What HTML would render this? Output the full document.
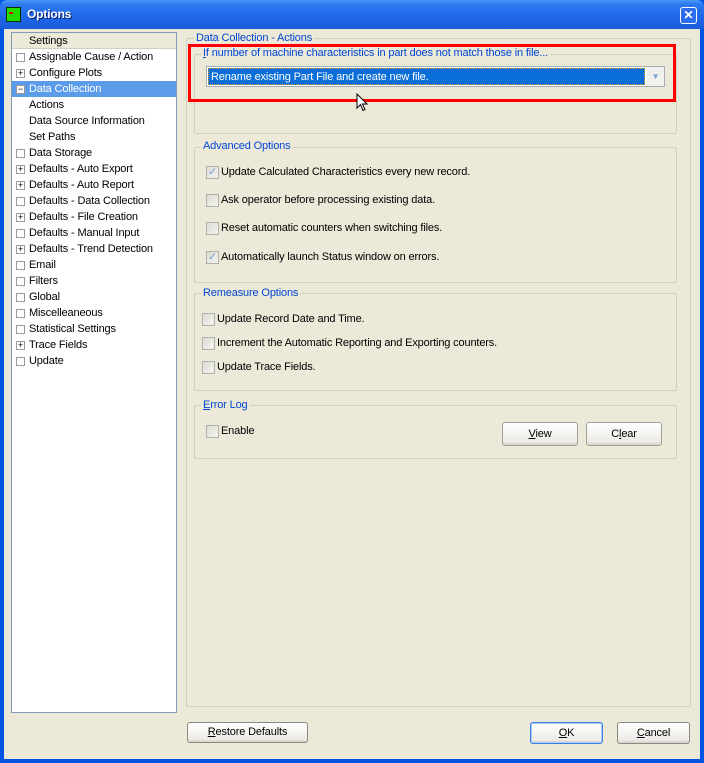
<!DOCTYPE html>
<html><head><meta charset="utf-8"><style>
*{margin:0;padding:0;box-sizing:border-box}
body{width:704px;height:763px;overflow:hidden;font:11px "Liberation Sans",sans-serif;letter-spacing:-0.15px;color:#000;background:#0054E3;position:relative}
.a{position:absolute}
#title{left:0;top:0;width:704px;height:29px;background:linear-gradient(#4A98F8 0%,#2C7AF0 15%,#1E66E8 60%,#1A5CD8 100%);border-radius:7px 7px 0 0}
#win{left:4px;top:29px;width:696px;height:730px;background:#ECE9D8}
.grp{position:absolute;border:1px solid #D0D0BF;border-radius:2px}
.lbl{position:absolute;background:#ECE9D8;color:#0046D5;padding:0 2px;white-space:nowrap}
.cb{position:absolute;width:13px;height:13px;border:1px solid #B0B0A8;background:linear-gradient(135deg,#DCDCD4,#F4F4F0)}
.ct{position:absolute;white-space:nowrap}
.btn{position:absolute;border:1px solid #003C74;border-radius:3px;background:linear-gradient(#FFFFFF,#ECEBE6 85%,#D6D0C5);text-align:center;line-height:20px}
.tr{position:absolute;left:0;width:164px;height:16px;line-height:16px;white-space:nowrap}
.ex{position:absolute;left:4px;top:4px;width:9px;height:9px;border:1px solid #999;background:#fff;font-size:9px;line-height:7px;text-align:center}
</style></head><body>
<div class="a" id="title"></div>
<div class="a" style="left:6px;top:7px;width:15px;height:15px;background:#22DD00;border:1px solid #030"></div>
<div class="a" style="left:9px;top:12px;width:4px;height:2px;background:#d00"></div>
<div class="a" style="left:27px;top:7px;color:#fff;font-weight:bold;font-size:12px;text-shadow:1px 1px #0A1E6A">Options</div>
<div class="a" style="left:680px;top:7px;width:17px;height:17px;border:1px solid #fff;border-radius:3px;background:#2C6DF0;color:#fff;font-weight:bold;text-align:center;line-height:15px;font-size:12px">✕</div>
<div class="a" id="win"></div>

<div class="a" style="left:11px;top:32px;width:166px;height:681px;background:#fff;border:1px solid #7F9DB9">
 <div class="tr" style="top:0;background:#ECE9D8;border-bottom:1px solid #D0D0BF;padding-left:17px">Settings</div>
 <div class="tr" style="top:16px;padding-left:17px"><span class="ex"></span>Assignable Cause / Action</div>
 <div class="tr" style="top:32px;padding-left:17px"><span class="ex">+</span>Configure Plots</div>
 <div class="tr" style="top:48px;padding-left:17px;background:#5A9CEA;color:#fff"><span class="ex" style="color:#000">−</span>Data Collection</div>
 <div class="tr" style="top:64px;padding-left:17px">Actions</div>
 <div class="tr" style="top:80px;padding-left:17px">Data Source Information</div>
 <div class="tr" style="top:96px;padding-left:17px">Set Paths</div>
 <div class="tr" style="top:112px;padding-left:17px"><span class="ex"></span>Data Storage</div>
 <div class="tr" style="top:128px;padding-left:17px"><span class="ex">+</span>Defaults - Auto Export</div>
 <div class="tr" style="top:144px;padding-left:17px"><span class="ex">+</span>Defaults - Auto Report</div>
 <div class="tr" style="top:160px;padding-left:17px"><span class="ex"></span>Defaults - Data Collection</div>
 <div class="tr" style="top:176px;padding-left:17px"><span class="ex">+</span>Defaults - File Creation</div>
 <div class="tr" style="top:192px;padding-left:17px"><span class="ex"></span>Defaults - Manual Input</div>
 <div class="tr" style="top:208px;padding-left:17px"><span class="ex">+</span>Defaults - Trend Detection</div>
 <div class="tr" style="top:224px;padding-left:17px"><span class="ex"></span>Email</div>
 <div class="tr" style="top:240px;padding-left:17px"><span class="ex"></span>Filters</div>
 <div class="tr" style="top:256px;padding-left:17px"><span class="ex"></span>Global</div>
 <div class="tr" style="top:272px;padding-left:17px"><span class="ex"></span>Miscelleaneous</div>
 <div class="tr" style="top:288px;padding-left:17px"><span class="ex"></span>Statistical Settings</div>
 <div class="tr" style="top:304px;padding-left:17px"><span class="ex">+</span>Trace Fields</div>
 <div class="tr" style="top:320px;padding-left:17px"><span class="ex"></span>Update</div>
</div>

<div class="grp" style="left:186px;top:38px;width:505px;height:669px"></div>
<div class="lbl" style="left:194px;top:32px">Data Collection - Actions</div>
<div class="grp" style="left:194px;top:54px;width:483px;height:80px"></div>
<div class="lbl" style="left:201px;top:47px"><u>I</u>f number of machine characteristics in part does not match those in file...</div>
<div class="a" style="left:206px;top:66px;width:459px;height:21px;border:1px solid #A5ACB2;background:#fff"></div>
<div class="a" style="left:208px;top:68px;width:437px;height:17px;background:#0A6ED8;color:#fff;line-height:17px;padding-left:2px;border:1px dotted #E8A000">Rename existing Part File and create new file.</div>
<div class="a" style="left:647px;top:67px;width:17px;height:19px;background:#F0F0EC;color:#7AA0E0;text-align:center;font-size:8px;line-height:19px">▼</div>
<div class="a" style="left:188px;top:44px;width:488px;height:58px;border:3px solid #F00"></div>
<svg class="a" style="left:356px;top:93px" width="14" height="20"><path d="M1 1 L1 15 L4.5 11.5 L7 17.5 L9 16.5 L6.5 11 L11 11 Z" fill="#fff" stroke="#000" stroke-width="1"/></svg>

<div class="grp" style="left:194px;top:147px;width:483px;height:136px"></div>
<div class="lbl" style="left:201px;top:140px">Advanced Options</div>
<div class="cb" style="left:206px;top:166px;color:#7BA0D8;font-size:11px;line-height:11px;text-align:center">✓</div><div class="ct" style="left:221px;top:166px">Update Calculated Characteristics every new record.</div>
<div class="cb" style="left:206px;top:194px"></div><div class="ct" style="left:221px;top:194px">Ask operator before processing existing data.</div>
<div class="cb" style="left:206px;top:222px"></div><div class="ct" style="left:221px;top:222px">Reset automatic counters when switching files.</div>
<div class="cb" style="left:206px;top:251px;color:#7BA0D8;font-size:11px;line-height:11px;text-align:center">✓</div><div class="ct" style="left:221px;top:251px">Automatically launch Status window on errors.</div>

<div class="grp" style="left:194px;top:293px;width:483px;height:98px"></div>
<div class="lbl" style="left:201px;top:287px">Remeasure Options</div>
<div class="cb" style="left:202px;top:313px"></div><div class="ct" style="left:217px;top:313px">Update Record Date and Time.</div>
<div class="cb" style="left:202px;top:337px"></div><div class="ct" style="left:217px;top:337px">Increment the Automatic Reporting and Exporting counters.</div>
<div class="cb" style="left:202px;top:361px"></div><div class="ct" style="left:217px;top:361px">Update Trace Fields.</div>

<div class="grp" style="left:194px;top:405px;width:483px;height:54px"></div>
<div class="lbl" style="left:201px;top:399px"><u>E</u>rror Log</div>
<div class="cb" style="left:206px;top:425px"></div><div class="ct" style="left:221px;top:425px">Enable</div>
<div class="btn" style="left:502px;top:422px;width:76px;height:24px;border-color:#A0A098;line-height:22px"><u>V</u>iew</div>
<div class="btn" style="left:586px;top:422px;width:76px;height:24px;border-color:#A0A098;line-height:22px">C<u>l</u>ear</div>

<div class="btn" style="left:187px;top:722px;width:121px;height:21px;border-color:#8A8A80;line-height:19px"><u>R</u>estore Defaults</div>
<div class="btn" style="left:530px;top:722px;width:73px;height:22px;border-color:#3C7FE6;box-shadow:inset 0 0 0 1px #A8CAF7;line-height:20px"><u>O</u>K</div>
<div class="btn" style="left:617px;top:722px;width:73px;height:22px;border-color:#8A8A80;line-height:20px"><u>C</u>ancel</div>
</body></html>
